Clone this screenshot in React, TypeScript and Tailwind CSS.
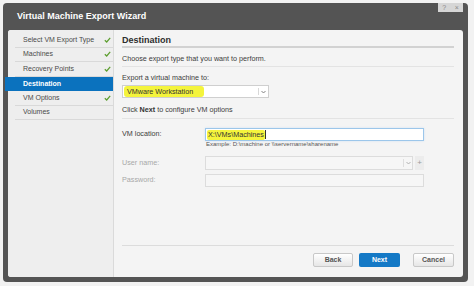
import React from 'react';

const font = { fontFamily: '"Liberation Sans", Arial, sans-serif' };

const Check = () => (
  <svg width="7" height="6" viewBox="0 0 7 6" className="shrink-0">
    <path d="M0.8 3.2 L2.7 5 L6.2 0.8" fill="none" stroke="#5c9e2e" strokeWidth="1.2" />
  </svg>
);

const Chevron = ({ color = '#777' }: { color?: string }) => (
  <svg width="5" height="4" viewBox="0 0 5 4">
    <path d="M0.5 1 L2.5 3 L4.5 1" fill="none" stroke={color} strokeWidth="0.9" />
  </svg>
);

const steps = [
  { label: 'Select VM Export Type', done: true },
  { label: 'Machines', done: true },
  { label: 'Recovery Points', done: true },
  { label: 'Destination', active: true },
  { label: 'VM Options', done: true },
  { label: 'Volumes' },
];

export default function App() {
  return (
    <div className="w-[474px] h-[286px] bg-[#f2f2f2] pt-[3px] pl-[3px] overflow-hidden" style={font}>
      {/* Dialog frame */}
      <div className="w-[465px] h-[279px] bg-[#545454] rounded-[4px] flex flex-col pl-[5px] pr-[5px] pb-[5px]">
        {/* Title bar */}
        <div className="h-[27px] flex justify-between items-start shrink-0">
          <span className="pt-[7px] pl-[9px] text-[9px] leading-[12px] font-bold text-white">
            Virtual Machine Export Wizard
          </span>
          <div className="w-[25px] h-[9px] bg-[#d6d6d6] flex items-center justify-around text-[7px] leading-none text-[#8a8a8a]">
            <span>?</span>
            <span>×</span>
          </div>
        </div>

        {/* Body panel */}
        <div className="flex-1 flex rounded-[3px] bg-[#f4f4f4]">
          {/* Steps sidebar */}
          <aside className="w-[106px] shrink-0 bg-[#eeeeee] border-r border-[#dadada] rounded-l-[3px] pt-[3px] pl-[7px]">
            {steps.map((s) =>
              s.active ? (
                <div
                  key={s.label}
                  className="h-[14.5px] -ml-[10px] pl-[18px] bg-[#0b72be] flex items-center text-[7px] font-bold text-white"
                >
                  {s.label}
                </div>
              ) : (
                <div
                  key={s.label}
                  className="h-[14.5px] border-b border-[#d9d9d9] flex items-center justify-between pl-[8px] pr-[2px] text-[7px] text-[#4a4a4a]"
                >
                  <span>{s.label}</span>
                  {s.done && <Check />}
                </div>
              )
            )}
          </aside>

          {/* Content */}
          <main className="flex-1 flex flex-col pl-[8px] pr-[9px] pb-[10px] text-[#3c3c3c]">
            <div className="mt-[4px] h-[12px] leading-[12px] text-[9px] font-bold text-[#2e2e2e]">Destination</div>
            <div className="h-[2px] bg-[#d2d2d2]" />

            <p className="mt-[6px] leading-[10px] text-[7.2px]">Choose export type that you want to perform.</p>
            <div className="mt-[2px] h-px bg-[#e3e3e3]" />

            <p className="mt-[6px] leading-[10px] text-[7.2px]">Export a virtual machine to:</p>
            <div className="mt-[2px] w-[147px] h-[13px] bg-white border border-[#cfcfcf] flex items-stretch">
              <div className="flex-1 flex items-center pl-[1px]">
                <span className="bg-[#f4f43c] rounded-[3px] pl-[3px] pr-[11px] leading-[11px] text-[7.2px] text-[#333]">
                  VMware Workstation
                </span>
              </div>
              <div className="w-[10px] border-l border-[#d8d8d8] my-[2px] flex items-center justify-center">
                <Chevron />
              </div>
            </div>

            <p className="mt-[7px] leading-[10px] text-[7.2px]">
              Click <span className="font-bold text-[#333]">Next</span> to configure VM options
            </p>
            <div className="mt-[3px] h-px bg-[#e3e3e3]" />

            {/* VM location */}
            <div className="mt-[9px] flex items-center">
              <span className="w-[83px] shrink-0 text-[7.2px]">VM location:</span>
              <div className="w-[219px] h-[13px] bg-white border border-[#9cc6ea] shadow-[0_0_2px_#cfe3f5] flex items-center pl-[1px]">
                <span className="bg-[#f4f43c] rounded-[2px] pl-[1px] pr-[1px] leading-[10px] text-[7.2px] text-[#333]">
                  X:\VMs\Machines
                </span>
                <span className="w-px h-[9px] bg-[#333]" />
              </div>
            </div>
            <div className="pl-[84px] leading-[7px] text-[6px] text-[#555]">
              Example: D:\machine or \\servername\sharename
            </div>

            {/* User name */}
            <div className="mt-[8px] flex items-center">
              <span className="w-[83px] shrink-0 text-[7.2px] text-[#a8a8a8]">User name:</span>
              <div className="w-[208px] h-[14px] bg-[#f6f6f6] border border-[#dcdcdc] flex items-stretch">
                <div className="flex-1" />
                <div className="w-[9px] border-l border-[#dedede] my-[2px] flex items-center justify-center">
                  <Chevron color="#aaa" />
                </div>
              </div>
              <div className="ml-[2px] w-[9px] h-[14px] flex items-center justify-center text-[8px] text-[#9a9a9a] bg-[#ececec]">
                +
              </div>
            </div>

            {/* Password */}
            <div className="mt-[4px] flex items-center">
              <span className="w-[83px] shrink-0 text-[7.2px] text-[#a8a8a8]">Password:</span>
              <div className="w-[219px] h-[13px] bg-[#f6f6f6] border border-[#dcdcdc]" />
            </div>

            <div className="flex-1" />

            <div className="h-px bg-[#dcdcdc]" />
            <div className="mt-[7px] flex justify-end gap-[6px]">
              <button className="w-[40px] h-[14px] border border-[#c8c8c8] rounded-[2px] bg-gradient-to-b from-white to-[#e6e6e6] text-[7px] font-bold text-[#555]">
                Back
              </button>
              <button className="w-[41px] h-[14px] rounded-[2px] bg-[#1479c6] text-[7px] font-bold text-white">
                Next
              </button>
              <button className="ml-[7px] w-[41px] h-[14px] border border-[#c8c8c8] rounded-[2px] bg-gradient-to-b from-white to-[#e6e6e6] text-[7px] font-bold text-[#555]">
                Cancel
              </button>
            </div>
          </main>
        </div>
      </div>
    </div>
  );
}
